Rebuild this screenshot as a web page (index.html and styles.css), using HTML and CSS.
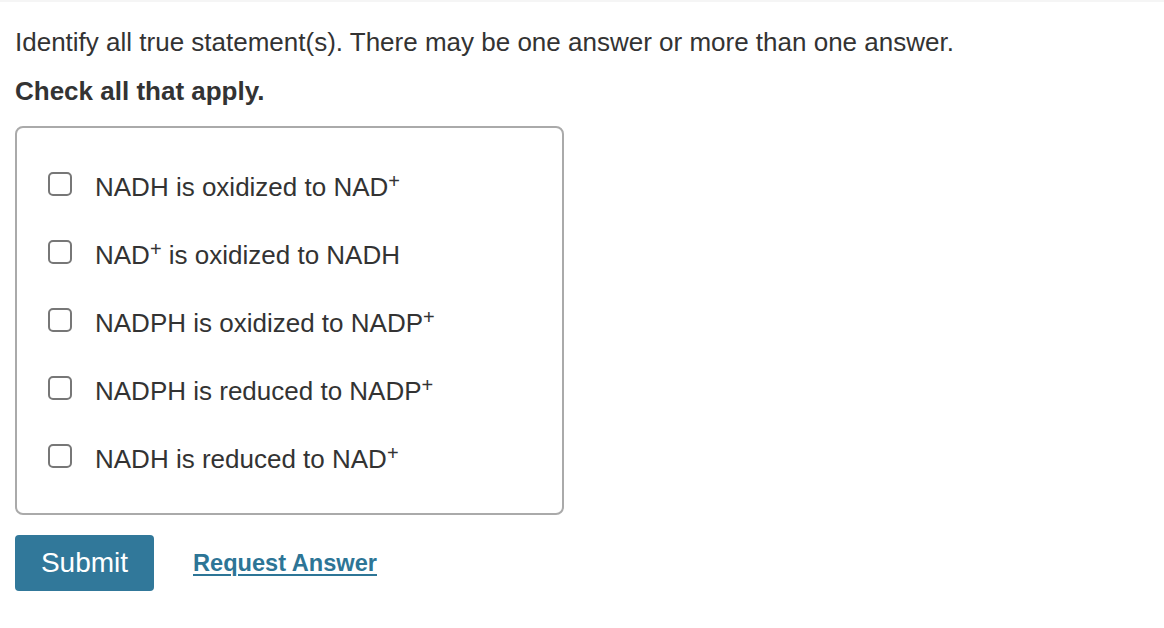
FILE: index.html
```html
<!DOCTYPE html>
<html>
<head>
<meta charset="utf-8">
<link rel="stylesheet" href="styles.css">
</head>
<body>
<div class="topbar"></div>
<div class="content">
  <p class="prompt">Identify all true statement(s). There may be one answer or more than one answer.</p>
  <p class="instr">Check all that apply.</p>
  <div class="options">
    <label class="option"><span class="box"></span><span class="txt">NADH is oxidized to NAD<sup>+</sup></span></label>
    <label class="option"><span class="box"></span><span class="txt">NAD<sup>+</sup> is oxidized to NADH</span></label>
    <label class="option"><span class="box"></span><span class="txt">NADPH is oxidized to NADP<sup>+</sup></span></label>
    <label class="option"><span class="box"></span><span class="txt">NADPH is reduced to NADP<sup>+</sup></span></label>
    <label class="option"><span class="box"></span><span class="txt">NADH is reduced to NAD<sup>+</sup></span></label>
  </div>
  <div class="actions">
    <button class="submit">Submit</button>
    <a class="request" href="#">Request Answer</a>
  </div>
</div>
</body>
</html>
```
FILE: styles.css
```css
html, body {
  margin: 0;
  padding: 0;
  background: #fff;
}
body {
  font-family: "Liberation Sans", Arial, sans-serif;
  color: #333;
}
.topbar {
  height: 2px;
  background: #f5f5f5;
}
.content {
  padding: 0 15px;
}
.prompt {
  margin: 0;
  padding-top: 25px;
  font-size: 26px;
  line-height: 30px;
}
.instr {
  margin: 19px 0 0;
  font-size: 26px;
  line-height: 30px;
  font-weight: bold;
}
.options {
  box-sizing: border-box;
  margin-top: 20px;
  width: 549px;
  border: 2px solid #aaa;
  border-radius: 8px;
  padding: 44px 0 39px 31px;
  display: flex;
  flex-direction: column;
  gap: 38px;
}
.option {
  display: flex;
  align-items: center;
  height: 30px;
}
.box {
  width: 20px;
  height: 20px;
  border: 2px solid #777;
  border-radius: 5px;
  flex: none;
  margin-top: -6px;
}
.txt {
  margin-left: 23px;
  font-size: 26px;
  line-height: 30px;
}
.txt sup {
  font-size: 20px;
  line-height: 0;
  vertical-align: 8px;
}
.actions {
  margin-top: 20px;
  display: flex;
  align-items: center;
}
.submit {
  width: 139px;
  height: 56px;
  border: none;
  border-radius: 4px;
  background: #31789a;
  color: #fff;
  font-family: "Liberation Sans", Arial, sans-serif;
  font-size: 28px;
  padding: 0;
}
.request {
  margin-left: 39px;
  color: #2d7596;
  font-weight: bold;
  font-size: 23.6px;
  text-decoration: underline;
  text-decoration-thickness: 2px;
  text-underline-offset: 3px;
}
```
